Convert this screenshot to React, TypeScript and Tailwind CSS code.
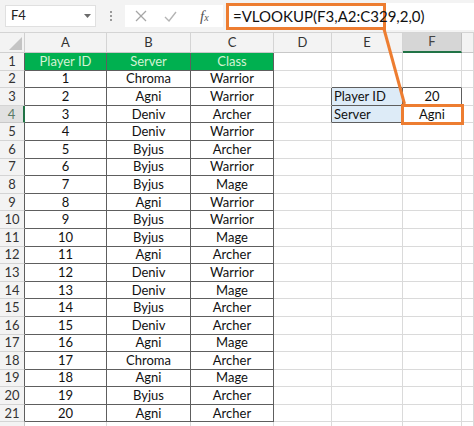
import React from 'react'

const data: [string, string, string][] = [
  ['Player ID', 'Server', 'Class'],
  ['1', 'Chroma', 'Warrior'],
  ['2', 'Agni', 'Warrior'],
  ['3', 'Deniv', 'Archer'],
  ['4', 'Deniv', 'Warrior'],
  ['5', 'Byjus', 'Archer'],
  ['6', 'Byjus', 'Warrior'],
  ['7', 'Byjus', 'Mage'],
  ['8', 'Agni', 'Warrior'],
  ['9', 'Byjus', 'Warrior'],
  ['10', 'Byjus', 'Mage'],
  ['11', 'Agni', 'Archer'],
  ['12', 'Deniv', 'Warrior'],
  ['13', 'Deniv', 'Mage'],
  ['14', 'Byjus', 'Archer'],
  ['15', 'Deniv', 'Archer'],
  ['16', 'Agni', 'Mage'],
  ['17', 'Chroma', 'Archer'],
  ['18', 'Agni', 'Mage'],
  ['19', 'Byjus', 'Archer'],
  ['20', 'Agni', 'Archer'],
]

const letters = ['', 'A', 'B', 'C', 'D', 'E', 'F', '']

const isTable = (r: number, c: number) => r >= 1 && r <= 21 && c >= 1 && c <= 3
const isLookup = (r: number, c: number) => (r === 3 || r === 4) && (c === 5 || c === 6)
const dark = (r: number, c: number) => isTable(r, c) || isLookup(r, c)

function cellText(r: number, c: number) {
  if (isTable(r, c)) return data[r - 1][c - 1]
  if (r === 3 && c === 5) return 'Player ID'
  if (r === 4 && c === 5) return 'Server'
  if (r === 3 && c === 6) return '20'
  if (r === 4 && c === 6) return 'Agni'
  return ''
}

function Cell({ r, c }: { r: number; c: number }) {
  const rDark = dark(r, c) || dark(r, c + 1)
  const bDark = dark(r, c) || dark(r + 1, c)
  let cls = 'h-[17.6px] border-r border-b flex items-center overflow-hidden whitespace-nowrap text-[13px] leading-none text-[#111] '
  cls += rDark ? 'border-r-[#5e5e5e] ' : 'border-r-[#dadada] '
  cls += bDark ? 'border-b-[#5e5e5e] ' : 'border-b-[#dadada] '
  if (r === 1 && c >= 1 && c <= 3) cls += 'bg-[#00b050] text-[#d3f3d3] justify-center '
  else if (isLookup(r, c) && c === 5) cls += 'bg-[#ddebf7] justify-start pl-[2px] '
  else cls += 'bg-white justify-center '
  if (r === 4 && c === 6) cls += 'outline-[3px] outline-solid outline-[#ed7d31] -outline-offset-1 relative z-10 '
  return <div className={cls}>{cellText(r, c)}</div>
}

function RowHead({ r }: { r: number }) {
  if (r === 4) {
    return (
      <div className="h-[17.6px] bg-[#e1e1e1] border-b border-b-[#c8c8c8] border-r-2 border-r-[#217346] flex items-center justify-center text-[13px] leading-none text-[#5a7a66]">
        {r}
      </div>
    )
  }
  return (
    <div className={`h-[17.6px] bg-[#f3f3f3] border-b border-b-[#d4d4d4] border-r flex items-center justify-center text-[13px] leading-none text-[#333] ${r <= 21 ? 'border-r-[#5e5e5e]' : 'border-r-[#c8c8c8]'}`}>
      {r <= 21 ? r : ''}
    </div>
  )
}

function ColHead({ c }: { c: number }) {
  if (c === 0) {
    return (
      <div className="h-[20px] bg-[#f3f3f3] border-r border-b border-[#d0d0d0] relative">
        <svg className="absolute right-[2px] bottom-[2px]" width="13" height="13" viewBox="0 0 13 13">
          <polygon points="13,0 13,13 0,13" fill="#c4c4c4" />
        </svg>
      </div>
    )
  }
  if (c === 6) {
    return (
      <div className="h-[20px] bg-[#d6d6d6] border-r border-r-[#c0c0c0] border-b-2 border-b-[#217346] flex items-center justify-center text-[13px] text-[#444]">
        F
      </div>
    )
  }
  return (
    <div className="h-[20px] bg-[#f3f3f3] border-r border-r-[#d4d4d4] border-b border-b-[#c8c8c8] flex items-center justify-center text-[13px] text-[#333]">
      {letters[c]}
    </div>
  )
}

function Toolbar() {
  return (
    <div className="h-[33px] bg-[#f3f3f3] border-b border-[#d4d4d4] flex items-center">
      <div className="ml-[5px] w-[91px] h-[22px] bg-white border border-[#e0e0e0] flex items-center justify-between pl-[5px] pr-[4px] text-[13px] text-[#222]">
        <span>F4</span>
        <svg width="7" height="4" viewBox="0 0 7 4">
          <polygon points="0,0 7,0 3.5,4" fill="#6b6b6b" />
        </svg>
      </div>
      <div className="w-[29px] flex flex-col items-center gap-[2px]">
        <span className="w-[2px] h-[2px] bg-[#9a9a9a]" />
        <span className="w-[2px] h-[2px] bg-[#9a9a9a]" />
        <span className="w-[2px] h-[2px] bg-[#9a9a9a]" />
      </div>
      <div className="w-[98px] h-[22px] bg-white flex items-center pl-[10px] gap-[17px]">
        <svg width="12" height="12" viewBox="0 0 12 12" stroke="#a6a6a6" strokeWidth="1.2">
          <line x1="1" y1="1" x2="11" y2="11" />
          <line x1="11" y1="1" x2="1" y2="11" />
        </svg>
        <svg width="13" height="11" viewBox="0 0 13 11" fill="none" stroke="#b4b4b4" strokeWidth="1.4">
          <polyline points="1,6 5,10 12,1" />
        </svg>
        <span className="ml-[6px] text-[#555] italic text-[15px] leading-none" style={{ fontFamily: '"Liberation Serif", serif' }}>
          f<span className="text-[10px]">x</span>
        </span>
      </div>
      <div className="ml-[3px] flex-1 h-[27px] bg-white flex">
        <div className="w-[160px] h-[27px] border-[3px] border-[#ed7d31] flex items-center pl-[4px] text-[15px] text-[#111] whitespace-nowrap">
          =VLOOKUP(F3,A2:C329,2,0)
        </div>
      </div>
    </div>
  )
}

export default function App() {
  const rows = Array.from({ length: 22 }, (_, i) => i + 1)
  const cols = [1, 2, 3, 4, 5, 6, 7]
  return (
    <div className="relative w-[474px] h-[426px] overflow-hidden bg-white" style={{ fontFamily: 'Lato, "Liberation Sans", sans-serif' }}>
      <Toolbar />
      <div className="grid grid-cols-[25px_82px_84px_83px_58px_71px_59px_1fr]">
        {[0, ...cols].map((c) => (
          <ColHead key={`h${c}`} c={c} />
        ))}
        {rows.map((r) => (
          <React.Fragment key={r}>
            <RowHead r={r} />
            {cols.map((c) => (
              <Cell key={c} r={r} c={c} />
            ))}
          </React.Fragment>
        ))}
      </div>
      <svg className="absolute inset-0 pointer-events-none z-20" width="474" height="426">
        <line x1="384" y1="29" x2="404.5" y2="104" stroke="#ed7d31" strokeWidth="3" />
      </svg>
    </div>
  )
}
